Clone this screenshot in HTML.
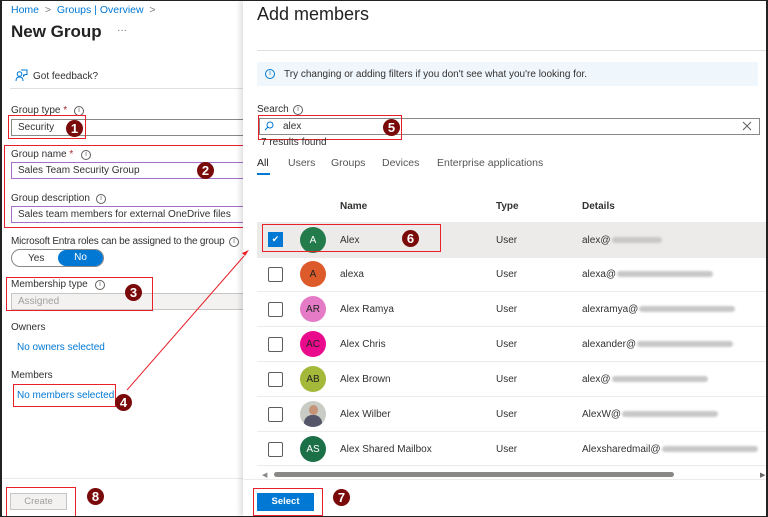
<!DOCTYPE html>
<html><head><meta charset="utf-8"><style>
*{margin:0;padding:0;box-sizing:border-box}
body{width:768px;height:517px;overflow:hidden;background:#fff;font-family:"Liberation Sans",sans-serif;color:#323130;position:relative}
.a{position:absolute;white-space:nowrap}
.t{font-size:10px}
.lnk{color:#0078d4}
.inp{position:absolute;border:1px solid #8a8886;height:17px;font-size:10px;line-height:16px;padding-left:6px;background:#fff}
.rb{position:absolute;border:1.5px solid #e8202a}
.bd{position:absolute;width:17px;height:17px;border-radius:50%;background:#7a0a0a;color:#fff;font-weight:bold;font-size:13px;line-height:17px;text-align:center}
.info{position:absolute;width:10px;height:10px;border:1px solid #605e5c;border-radius:50%;font-size:7px;line-height:8px;text-align:center;color:#605e5c}
.av{position:absolute;width:26px;height:26px;border-radius:50%;font-size:10px;line-height:28px;text-align:center;color:#222}
.cb{position:absolute;left:268px;width:15px;height:15px;border:1px solid #605e5c;border-radius:2px;background:#fff}
.sep{position:absolute;left:257px;width:511px;height:1px;background:#edebe9}
.blur{display:inline-block;height:6px;background:#c8c8c8;border-radius:3px;vertical-align:middle;filter:blur(1px);margin-left:1px}
</style></head><body>
<div class="a" style="left:0;top:0;width:768px;height:517px;border:1px solid #222;border-left-width:2px;border-right-width:2px;z-index:50;pointer-events:none"></div>
<!-- left -->
<div class="a lnk" style="left:11px;top:4px;font-size:10.5px">Home <span style="color:#777">&nbsp;&gt;&nbsp;</span> Groups | Overview <span style="color:#777">&nbsp;&gt;</span></div>
<div class="a" style="left:11px;top:22px;font-size:17px;font-weight:bold;color:#222">New Group</div>
<div class="a" style="left:117px;top:25px;font-size:10px;color:#666">···</div>
<svg class="a" style="left:15px;top:69px" width="13" height="13" viewBox="0 0 13 13" fill="none" stroke="#0078d4" stroke-width="1"><circle cx="4.5" cy="5" r="2.3"/><path d="M1 12c0-3 1.5-4 3.5-4s3.5 1 3.5 4"/><path d="M6 1h6v4.5h-2l-1.5 1.5v-1.5"/></svg>
<div class="a" style="left:33px;top:71px;font-size:10px">Got feedback?</div>
<div class="a" style="left:10px;top:88px;width:233px;height:1px;background:#e1dfdd"></div>
<div class="a t" style="left:11px;top:105px">Group type <span style="color:#a4262c">*</span></div><div class="info" style="left:74px;top:106px">i</div>
<div class="inp" style="left:11px;top:119px;width:240px">Security</div>
<div class="rb" style="left:8px;top:115px;width:78px;height:24px"></div><div class="bd" style="left:66px;top:120px">1</div>
<div class="a t" style="left:11px;top:149px">Group name <span style="color:#a4262c">*</span></div><div class="info" style="left:81px;top:150px">i</div>
<div class="inp" style="left:11px;top:162px;width:240px;border-color:#a56ec9">Sales Team Security Group</div>
<div class="a t" style="left:11px;top:193px">Group description</div><div class="info" style="left:96px;top:194px">i</div>
<div class="inp" style="left:11px;top:206px;width:240px;border-color:#a56ec9;overflow:hidden">Sales team members for external OneDrive files sharing</div>
<div class="rb" style="left:4px;top:145px;width:240px;height:83px"></div><div class="bd" style="left:197px;top:162px">2</div>
<div class="a t" style="left:11px;top:236px;letter-spacing:-0.2px">Microsoft Entra roles can be assigned to the group</div><div class="info" style="left:229px;top:237px">i</div>
<div class="a" style="left:11px;top:249px;width:93px;height:18px;border:1px solid #8a8886;border-radius:9px"></div>
<div class="a t" style="left:28px;top:253px">Yes</div>
<div class="a" style="left:58px;top:250px;width:45px;height:16px;border-radius:8px;background:#0078d4;color:#fff;font-size:10px;text-align:center;line-height:16px">No</div>
<div class="a t" style="left:11px;top:279px">Membership type</div><div class="info" style="left:95px;top:280px">i</div>
<div class="inp" style="left:11px;top:293px;width:240px;background:#f3f2f1;border-color:#c8c6c4;color:#a19f9d">Assigned</div>
<div class="rb" style="left:6px;top:277px;width:147px;height:34px"></div><div class="bd" style="left:125px;top:284px">3</div>
<div class="a t" style="left:11px;top:322px">Owners</div>
<div class="a t lnk" style="left:17px;top:342px">No owners selected</div>
<div class="a t" style="left:11px;top:370px">Members</div>
<div class="a t lnk" style="left:17px;top:390px">No members selected</div>
<div class="rb" style="left:13px;top:384px;width:103px;height:23px"></div><div class="bd" style="left:115px;top:394px">4</div>
<div class="a" style="left:0;top:478px;width:243px;height:1px;background:#edebe9"></div>
<div class="a" style="left:10px;top:493px;width:57px;height:17px;border:1px solid #c8c6c4;background:#f3f2f1;color:#a19f9d;font-size:9.5px;text-align:center;line-height:15px">Create</div>
<div class="rb" style="left:6px;top:487px;width:70px;height:30px"></div><div class="bd" style="left:87px;top:488px">8</div>
<!-- right panel -->
<div class="a" style="left:243px;top:0;width:525px;height:517px;background:#fff;box-shadow:-3px 0 5px rgba(0,0,0,.12)"></div>
<div class="a" style="left:257px;top:4px;font-size:18px;color:#222">Add members</div>
<div class="a" style="left:257px;top:50px;width:511px;height:1px;background:#e1dfdd"></div>
<div class="a" style="left:257px;top:62px;width:501px;height:24px;background:#eff6fc"></div>
<div class="info" style="left:265px;top:69px;border-color:#0078d4;color:#0078d4">i</div>
<div class="a t" style="left:284px;top:69px;color:#323130">Try changing or adding filters if you don't see what you're looking for.</div>
<div class="a t" style="left:257px;top:104px">Search</div><div class="info" style="left:293px;top:105px">i</div>
<div class="a" style="left:259px;top:118px;width:501px;height:17px;border:1px solid #8a8886"></div>
<svg class="a" style="left:264px;top:121px" width="10" height="10" viewBox="0 0 10 10" fill="none" stroke="#0078d4" stroke-width="1"><circle cx="6" cy="4" r="3"/><path d="M4 6L1 9"/></svg>
<div class="a t" style="left:283px;top:121px">alex</div>
<svg class="a" style="left:742px;top:121px" width="10" height="10" viewBox="0 0 10 10" stroke="#605e5c" stroke-width="1"><path d="M1 1l8 8M9 1l-8 8"/></svg>
<div class="rb" style="left:258px;top:115px;width:144px;height:25px"></div><div class="bd" style="left:383px;top:119px">5</div>
<div class="a t" style="left:261px;top:137px">7 results found</div>
<div class="a" style="left:257px;top:157px;font-size:10.5px;color:#222">All</div>
<div class="a" style="left:257px;top:173px;width:13px;height:2px;background:#0078d4"></div>
<div class="a" style="left:288px;top:157px;font-size:10.5px;color:#555">Users</div>
<div class="a" style="left:331px;top:157px;font-size:10.5px;color:#555">Groups</div>
<div class="a" style="left:382px;top:157px;font-size:10.5px;color:#555">Devices</div>
<div class="a" style="left:437px;top:157px;font-size:10.5px;color:#555">Enterprise applications</div>
<div class="a t" style="left:340px;top:201px;font-weight:bold">Name</div>
<div class="a t" style="left:496px;top:201px;font-weight:bold">Type</div>
<div class="a t" style="left:582px;top:201px;font-weight:bold">Details</div>
<div class="a" style="left:257px;top:222px;width:511px;height:35px;background:#edebe9"></div>
<div class="a" style="left:268px;top:232px;width:15px;height:15px;background:#0078d4;color:#fff;font-size:9px;text-align:center;line-height:15px">✔</div>
<div class="av" style="left:300px;top:227px;background:#237b4b;color:#fff">A</div>
<div class="a t" style="left:340px;top:235px">Alex</div><div class="a t" style="left:496px;top:235px">User</div><div class="a t" style="left:582px;top:235px">alex@<span class="blur" style="width:50px"></span></div>
<div class="rb" style="left:262px;top:224px;width:179px;height:28px"></div><div class="bd" style="left:402px;top:230px">6</div>
<div class="sep" style="top:257px"></div>
<div class="cb" style="top:267px"></div><div class="av" style="left:300px;top:261px;background:#dd5a2b">A</div>
<div class="a t" style="left:340px;top:269px">alexa</div><div class="a t" style="left:496px;top:269px">User</div><div class="a t" style="left:582px;top:269px">alexa@<span class="blur" style="width:96px"></span></div>
<div class="sep" style="top:291px"></div>
<div class="cb" style="top:302px"></div><div class="av" style="left:300px;top:296px;background:#e57bc6">AR</div>
<div class="a t" style="left:340px;top:304px">Alex Ramya</div><div class="a t" style="left:496px;top:304px">User</div><div class="a t" style="left:582px;top:304px">alexramya@<span class="blur" style="width:96px"></span></div>
<div class="sep" style="top:326px"></div>
<div class="cb" style="top:337px"></div><div class="av" style="left:300px;top:331px;background:#ea0a8c">AC</div>
<div class="a t" style="left:340px;top:339px">Alex Chris</div><div class="a t" style="left:496px;top:339px">User</div><div class="a t" style="left:582px;top:339px">alexander@<span class="blur" style="width:96px"></span></div>
<div class="sep" style="top:361px"></div>
<div class="cb" style="top:372px"></div><div class="av" style="left:300px;top:366px;background:#a4b83a">AB</div>
<div class="a t" style="left:340px;top:374px">Alex Brown</div><div class="a t" style="left:496px;top:374px">User</div><div class="a t" style="left:582px;top:374px">alex@<span class="blur" style="width:96px"></span></div>
<div class="sep" style="top:396px"></div>
<div class="cb" style="top:407px"></div><div class="av" style="left:300px;top:401px;background:#c9ccc4;overflow:hidden"><div style="position:absolute;left:9px;top:4px;width:9px;height:10px;border-radius:50%;background:#c49378"></div><div style="position:absolute;left:4px;top:14px;width:18px;height:14px;border-radius:8px 8px 0 0;background:#55566a"></div></div>
<div class="a t" style="left:340px;top:409px">Alex Wilber</div><div class="a t" style="left:496px;top:409px">User</div><div class="a t" style="left:582px;top:409px">AlexW@<span class="blur" style="width:96px"></span></div>
<div class="sep" style="top:431px"></div>
<div class="cb" style="top:442px"></div><div class="av" style="left:300px;top:436px;background:#1b7048;color:#fff">AS</div>
<div class="a t" style="left:340px;top:444px">Alex Shared Mailbox</div><div class="a t" style="left:496px;top:444px">User</div><div class="a t" style="left:582px;top:444px">Alexsharedmail@<span class="blur" style="width:96px"></span></div>
<div class="sep" style="top:465px"></div>
<div class="a" style="left:262px;top:471px;font-size:7px;color:#888">◀</div>
<div class="a" style="left:274px;top:472px;width:400px;height:5px;border-radius:3px;background:#8a8886"></div>
<div class="a" style="left:760px;top:471px;font-size:7px;color:#666">▶</div>
<div class="a" style="left:243px;top:479px;width:525px;height:1px;background:#edebe9"></div>
<div class="a" style="left:257px;top:493px;width:57px;height:18px;background:#0078d4;color:#fff;font-size:9.5px;font-weight:bold;text-align:center;line-height:18px">Select</div>
<div class="rb" style="left:253px;top:488px;width:70px;height:28px"></div><div class="bd" style="left:333px;top:489px">7</div>
<!-- arrow -->
<svg class="a" style="left:0;top:0;z-index:40" width="768" height="517"><path d="M127 390L244 256" stroke="#e8202a" stroke-width="1"/><path d="M249 250l-7 3 3 3z" fill="#e8202a"/></svg>
</body></html>
